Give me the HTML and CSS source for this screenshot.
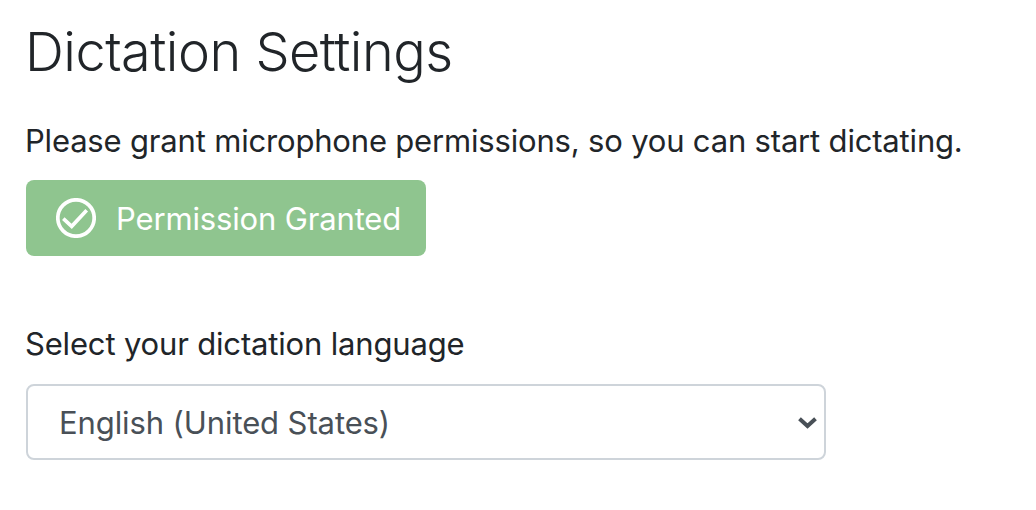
FILE: index.html
```html
<!DOCTYPE html>
<html lang="en">
<head>
  <meta charset="UTF-8" />
  <title>Dictation Settings</title>
  <link rel="stylesheet" href="styles.css">
</head>
<body>
  <h1 class="title">Dictation Settings</h1>
  <p class="intro">Please grant microphone permissions, so you can start dictating.</p>
  <button class="grant-btn" type="button" disabled>
    <svg class="grant-icon" viewBox="0 0 40 40" width="40" height="40">
      <circle cx="20" cy="20" r="18.2" />
      <path d="M7.3 20.7 L15.7 28.3 L30.7 12.3" />
    </svg>
    <span class="grant-text">Permission Granted</span>
  </button>

  <label class="lang-label" for="lang">Select your dictation language</label>
  <div class="select-wrap">
    <select class="lang-select" id="lang">
      <option>English (United States)</option>
    </select>
    <!-- chevron sits over the native select -->
    <svg class="chevron" viewBox="0 0 20 14" width="20" height="14">
      <path d="M1.5 3.8 L9.5 11 L17.5 3.8" />
    </svg>
  </div>
</body>
</html>
```

FILE: styles.css
```css
body {
  margin: 0;
  padding: 0 26px;
  background-color: #fff;
  color: #212529;
  font-family: Inter, "Liberation Sans", sans-serif;
}

.title {
  margin: 0 0 0 -1px;
  padding-top: 18px;
  font-size: 54px;
  line-height: 67px;
  font-weight: 300;
  letter-spacing: -0.5px;
}

.intro {
  margin: 0 0 0 -1px;
  padding-top: 32px;
  font-size: 31px;
  line-height: 48px;
  letter-spacing: -0.18px;
  height: 48px;
  white-space: nowrap;
}

.grant-btn {
  display: flex;
  align-items: center;
  gap: 20px;
  width: 400px;
  height: 76px;
  margin-top: 15px;
  padding: 0 0 0 30px;
  border: 0;
  border-radius: 8px;
  background-color: #8fc58f;
  color: #fff;
  font-family: inherit;
  font-size: 31px;
  letter-spacing: -0.15px;
}

.grant-text {
  white-space: nowrap;
}

.grant-icon {
  flex: none;
  fill: none;
  stroke: #fff;
  stroke-width: 3.7;
}

.lang-label {
  display: block;
  margin: 64px 0 0 -1px;
  font-size: 31px;
  line-height: 48px;
  letter-spacing: -0.17px;
}

.select-wrap {
  position: relative;
  width: 800px;
  margin-top: 16px;
}

.lang-select {
  display: block;
  width: 100%;
  height: 76px;
  padding: 0 31px;
  border: 2px solid #ced4da;
  border-radius: 8px;
  background-color: #fff;
  color: #495057;
  font-family: inherit;
  font-size: 31px;
  letter-spacing: -0.1px;
  appearance: none;
}

.chevron {
  position: absolute;
  top: 31px;
  right: 8px;
  fill: none;
  stroke: #495057;
  stroke-width: 4;
}
```
